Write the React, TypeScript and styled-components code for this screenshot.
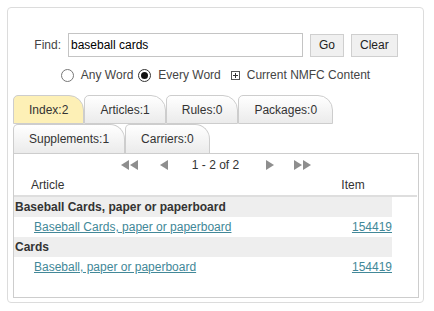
import React from "react";
import styled, { createGlobalStyle } from "styled-components";

const GlobalStyle = createGlobalStyle`
  body {
    margin: 0;
    background: #fff;
    font-family: "Liberation Sans", Arial, sans-serif;
    font-size: 12px;
    color: #333;
  }
`;

interface ITab {
  label: string;
  active?: boolean;
}

interface IIndexRow {
  group: string;
  items: Array<{ title: string; item: string }>;
}

const firstTabs: Array<ITab> = [
  { label: "Index:2", active: true },
  { label: "Articles:1" },
  { label: "Rules:0" },
  { label: "Packages:0" },
];

const secondTabs: Array<ITab> = [
  { label: "Supplements:1" },
  { label: "Carriers:0" },
];

const rows: Array<IIndexRow> = [
  {
    group: "Baseball Cards, paper or paperboard",
    items: [{ title: "Baseball Cards, paper or paperboard", item: "154419" }],
  },
  {
    group: "Cards",
    items: [{ title: "Baseball, paper or paperboard", item: "154419" }],
  },
];

const Panel = styled.div`
  box-sizing: border-box;
  margin: 7px;
  width: 417px;
  height: 296px;
  border: 1px solid #dcdcdc;
  border-radius: 4px;
  padding: 25px 5px 4px 5px;
`;

const FindRow = styled.div`
  display: flex;
  justify-content: center;
  align-items: center;
  height: 24px;
  padding-left: 1px;

  label {
    color: #444;
    margin-right: 7px;
  }
`;

const SearchInput = styled.input`
  box-sizing: border-box;
  width: 235px;
  height: 24px;
  border: 1px solid #c4c4c4;
  padding: 0 2px;
  font-family: "Liberation Sans", Arial, sans-serif;
  font-size: 12px;
  color: #000;
  outline: none;
  margin-right: 7px;
`;

const Button = styled.button<{ $gap?: number }>`
  box-sizing: border-box;
  height: 23px;
  padding: 0 8px;
  border: 1px solid #cfcfcf;
  background: #f0f0f0;
  font-family: "Liberation Sans", Arial, sans-serif;
  font-size: 12px;
  color: #222;
  margin-left: ${({ $gap }) => $gap ?? 0}px;
`;

const OptionRow = styled.div`
  display: flex;
  justify-content: center;
  align-items: center;
  height: 16px;
  margin-top: 10px;
  color: #444;
`;

const Radio = styled.span<{ $checked?: boolean }>`
  box-sizing: border-box;
  width: 13px;
  height: 13px;
  border-radius: 50%;
  border: 1px solid ${({ $checked }) => ($checked ? "#333" : "#777")};
  background: #fff;
  display: inline-flex;
  align-items: center;
  justify-content: center;
  margin-right: 7px;

  &::after {
    content: "";
    width: 7px;
    height: 7px;
    border-radius: 50%;
    background: ${({ $checked }) => ($checked ? "#111" : "transparent")};
  }
`;

const OptionText = styled.span<{ $gap: number }>`
  margin-right: ${({ $gap }) => $gap}px;
`;

const PlusBox = styled.span`
  box-sizing: border-box;
  width: 9px;
  height: 9px;
  border: 1px solid #555;
  display: inline-flex;
  align-items: center;
  justify-content: center;
  margin-right: 7px;
`;

const TabRow = styled.div<{ $top?: boolean }>`
  display: flex;
  margin-top: ${({ $top }) => ($top ? 12 : 0)}px;
`;

const Tab = styled.div<{ $active?: boolean; $last?: boolean }>`
  box-sizing: border-box;
  height: 29px;
  padding: 0 15px;
  display: flex;
  align-items: center;
  border: 1px solid #cdcdcd;
  border-bottom: ${({ $last }) => ($last ? "none" : "1px solid #cdcdcd")};
  border-radius: 5px 15px 0 0;
  background: ${({ $active }) =>
    $active ? "#fdf0b6" : "linear-gradient(#ffffff, #ebebeb)"};
  color: #333;
  white-space: nowrap;
`;

const ContentBox = styled.div`
  box-sizing: border-box;
  width: 406px;
  height: 145px;
  border: 1px solid #cdcdcd;
`;

const Pager = styled.div`
  display: flex;
  justify-content: center;
  align-items: center;
  height: 21px;
  color: #333;
`;

const PagerSlot = styled.span<{ $gap: number }>`
  display: inline-flex;
  margin-left: ${({ $gap }) => $gap}px;
`;

const HeaderRow = styled.div`
  display: flex;
  align-items: center;
  height: 20px;
  border-bottom: 2px solid #dedede;
  margin-right: 1px;
`;

const HeaderCell = styled.div<{ $left: number }>`
  padding-left: ${({ $left }) => $left}px;
  color: #333;
`;

const Body = styled.div`
  width: 378px;
`;

const GroupRow = styled.div`
  height: 20px;
  line-height: 20px;
  background: #eeeeee;
  font-weight: bold;
  padding-left: 1px;
  color: #333;
`;

const ItemRow = styled.div`
  height: 20px;
  display: flex;
  align-items: center;
  justify-content: space-between;
  padding-left: 20px;

  a {
    color: #428898;
    text-decoration: underline;
  }
`;

const Triangle = ({ dir, x = 0 }: { dir: "left" | "right"; x?: number }) => (
  <path
    d={
      dir === "left"
        ? `M${x + 8} 0 L${x + 8} 10 L${x} 5 Z`
        : `M${x} 0 L${x} 10 L${x + 8} 5 Z`
    }
    fill="#8e8e8e"
  />
);

const PagerIcon = ({
  dir,
  double,
}: {
  dir: "left" | "right";
  double?: boolean;
}) => (
  <svg
    width={double ? 17 : 8}
    height={10}
    viewBox={`0 0 ${double ? 17 : 8} 10`}
  >
    <Triangle dir={dir} />
    {double && <Triangle dir={dir} x={9} />}
  </svg>
);

const App = () => {
  return (
    <>
      <GlobalStyle />
      <Panel>
        <FindRow>
          <label>Find:</label>
          <SearchInput defaultValue="baseball cards" />
          <Button>Go</Button>
          <Button $gap={7}>Clear</Button>
        </FindRow>

        <OptionRow>
          <Radio />
          <OptionText $gap={5}>Any Word</OptionText>
          <Radio $checked />
          <OptionText $gap={10}>Every Word</OptionText>
          <PlusBox>
            <svg width="7" height="7" viewBox="0 0 7 7">
              <path d="M3.5 1 V6 M1 3.5 H6" stroke="#333" strokeWidth="1" />
            </svg>
          </PlusBox>
          <span>Current NMFC Content</span>
        </OptionRow>

        <TabRow $top>
          {firstTabs.map(({ label, active }) => (
            <Tab key={label} $active={active}>
              {label}
            </Tab>
          ))}
        </TabRow>
        <TabRow>
          {secondTabs.map(({ label }) => (
            <Tab key={label} $last>
              {label}
            </Tab>
          ))}
        </TabRow>

        <ContentBox>
          <Pager>
            <PagerSlot $gap={0}>
              <PagerIcon dir="left" double />
            </PagerSlot>
            <PagerSlot $gap={22}>
              <PagerIcon dir="left" />
            </PagerSlot>
            <PagerSlot $gap={24}>1 - 2 of 2</PagerSlot>
            <PagerSlot $gap={27}>
              <PagerIcon dir="right" />
            </PagerSlot>
            <PagerSlot $gap={20}>
              <PagerIcon dir="right" double />
            </PagerSlot>
          </Pager>
          <HeaderRow>
            <HeaderCell $left={17}>Article</HeaderCell>
            <HeaderCell $left={277}>Item</HeaderCell>
          </HeaderRow>
          <Body>
            {rows.map(({ group, items }) => (
              <React.Fragment key={group}>
                <GroupRow>{group}</GroupRow>
                {items.map(({ title, item }) => (
                  <ItemRow key={title}>
                    <a href="#">{title}</a>
                    <a href="#">{item}</a>
                  </ItemRow>
                ))}
              </React.Fragment>
            ))}
          </Body>
        </ContentBox>
      </Panel>
    </>
  );
};

export default App;
